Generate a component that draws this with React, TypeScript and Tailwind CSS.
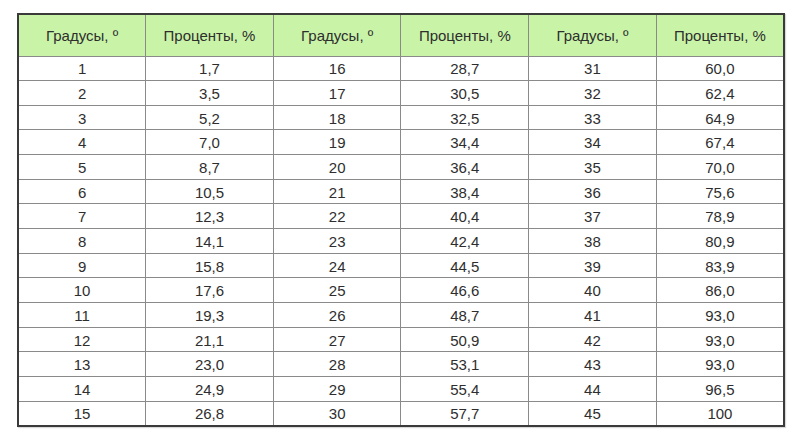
const rows: [number, string, number, string, number, string][] = [
  [1, "1,7", 16, "28,7", 31, "60,0"],
  [2, "3,5", 17, "30,5", 32, "62,4"],
  [3, "5,2", 18, "32,5", 33, "64,9"],
  [4, "7,0", 19, "34,4", 34, "67,4"],
  [5, "8,7", 20, "36,4", 35, "70,0"],
  [6, "10,5", 21, "38,4", 36, "75,6"],
  [7, "12,3", 22, "40,4", 37, "78,9"],
  [8, "14,1", 23, "42,4", 38, "80,9"],
  [9, "15,8", 24, "44,5", 39, "83,9"],
  [10, "17,6", 25, "46,6", 40, "86,0"],
  [11, "19,3", 26, "48,7", 41, "93,0"],
  [12, "21,1", 27, "50,9", 42, "93,0"],
  [13, "23,0", 28, "53,1", 43, "93,0"],
  [14, "24,9", 29, "55,4", 44, "96,5"],
  [15, "26,8", 30, "57,7", 45, "100"],
];

const headers = ["Градусы, º", "Проценты, %", "Градусы, º", "Проценты, %", "Градусы, º", "Проценты, %"];

export default function App() {
  return (
    <div className="w-[800px] h-[448px] bg-white pt-[13px] pl-[17px] font-['Liberation_Sans',Arial,sans-serif] text-[15px] text-[#2e2e2e]">
      <table className="w-[768px] border-collapse border-2 border-[#3a3a3a] table-fixed shadow-[1px_1px_1px_rgba(0,0,0,0.15)]">
        <thead>
          <tr className="h-[42px] bg-[#c9f4a8]">
            {headers.map((h, i) => (
              <th key={i} className="border border-[#8a8a8a] font-normal text-center pt-[1px]">
                {h}
              </th>
            ))}
          </tr>
        </thead>
        <tbody>
          {rows.map((r, i) => (
            <tr key={i} className="h-[24.67px]">
              {r.map((v, j) => (
                <td key={j} className="border border-[#8a8a8a] text-center leading-none pt-[1px]">
                  {v}
                </td>
              ))}
            </tr>
          ))}
        </tbody>
      </table>
    </div>
  );
}
